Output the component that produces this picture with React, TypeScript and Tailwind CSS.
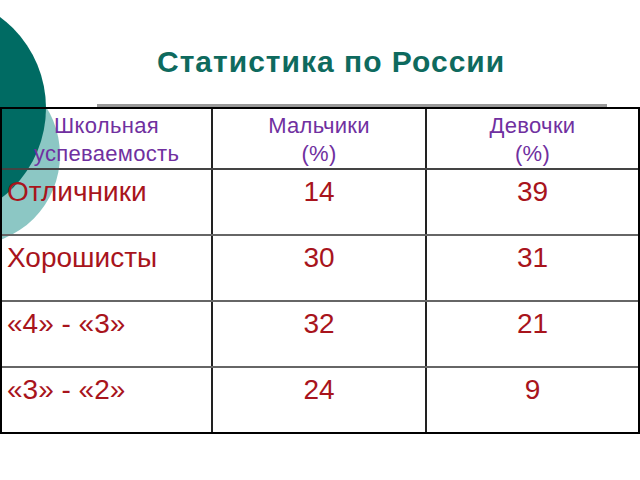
import React from "react";

const rows = [
  { label: "Отличники", b: "14", g: "39" },
  { label: "Хорошисты", b: "30", g: "31" },
  { label: "«4» - «3»", b: "32", g: "21" },
  { label: "«3» - «2»", b: "24", g: "9" },
];

export default function App() {
  return (
    <div
      className="relative w-[640px] h-[480px] overflow-hidden bg-white"
      style={{ fontFamily: '"Liberation Sans", Arial, sans-serif' }}
    >
      <div className="absolute left-[-120px] top-[65px] w-[180px] h-[180px] rounded-full bg-[#8cc7c4]" />
      <div className="absolute left-[-180px] top-[-5px] w-[226px] h-[226px] rounded-full bg-[#006b63]" />

      <div className="relative flex flex-col">
        <div className="h-[104px] pt-[46px] pl-[157px]">
          <h1 className="text-[30px] leading-[32px] tracking-[1px] font-bold text-[#0e6a5e]">Статистика по России</h1>
        </div>
        <div className="ml-[97px] w-[510px] h-[3px] bg-[#9a9a9a]" />
        <div className="w-[640px] border-2 border-black">
          <div className="grid grid-cols-[211px_214px_1fr] h-[61px] border-b-2 border-[#444]">
            <div className="border-r-2 border-[#222] flex flex-col items-center pt-[3px] text-[22px] leading-[28px] tracking-[0.3px] text-[#7030a0]">
              <span>Школьная</span>
              <span>успеваемость</span>
            </div>
            <div className="border-r-2 border-[#222] flex flex-col items-center pt-[3px] text-[22px] leading-[28px] tracking-[0.3px] text-[#7030a0]">
              <span>Мальчики</span>
              <span>(%)</span>
            </div>
            <div className="flex flex-col items-center pt-[3px] text-[22px] leading-[28px] tracking-[0.3px] text-[#7030a0]">
              <span>Девочки</span>
              <span>(%)</span>
            </div>
          </div>
          {rows.map((r, i) => (
            <div
              key={r.label}
              className={
                i < rows.length - 1
                  ? "grid grid-cols-[211px_214px_1fr] h-[66px] border-b-2 border-[#666]"
                  : "grid grid-cols-[211px_214px_1fr] h-[64px]"
              }
            >
              <div className="border-r-2 border-[#222] pl-[5px] pt-[8px] text-[28px] leading-[28px] text-[#a8141c]">
                {r.label}
              </div>
              <div className="border-r-2 border-[#222] text-center pt-[8px] text-[28px] leading-[28px] text-[#a8141c]">
                {r.b}
              </div>
              <div className="text-center pt-[8px] text-[28px] leading-[28px] text-[#a8141c]">{r.g}</div>
            </div>
          ))}
        </div>
      </div>
    </div>
  );
}
